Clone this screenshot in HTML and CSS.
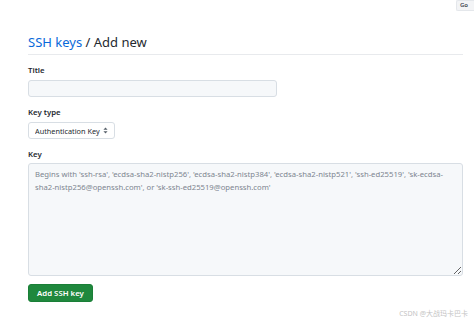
FILE: index.html
```html
<!DOCTYPE html>
<html lang="en-US">
<head>
    <meta charset="UTF-8">
    <meta name="viewport" content="width=device-width, initial-scale=1.0">
    <title>SSH keys / Add new</title>
    <link rel="stylesheet" href="styles.css">
</head>
<body>
    <div class="topbar">
        <button class="go-btn" type="button">Go</button>
    </div>

    <div class="container">
        <h1 class="subhead"><a href="#">SSH keys</a> / Add new</h1>

        <form class="key-form">
            <div class="form-group">
                <label for="title">Title</label>
                <input id="title" class="form-control title-input" type="text">
            </div>

            <div class="form-group">
                <label for="key_type">Key type</label>
                <div class="select-wrap">
                    <select id="key_type" class="form-select">
                        <option>Authentication Key</option>
                        <option>Signing Key</option>
                    </select>
                    <svg class="select-arrow" width="5" height="7" viewBox="0 0 6 8">
                        <path d="M3 0.5 L5.5 3.2 H0.5 Z M3 7.5 L5.5 4.8 H0.5 Z" fill="#57606a"/>
                    </svg>
                </div>
            </div>

            <div class="form-group key-group">
                <label for="key">Key</label>
                <textarea id="key" class="form-control key-input" placeholder="Begins with 'ssh-rsa', 'ecdsa-sha2-nistp256', 'ecdsa-sha2-nistp384', 'ecdsa-sha2-nistp521', 'ssh-ed25519', 'sk-ecdsa-sha2-nistp256@openssh.com', or 'sk-ssh-ed25519@openssh.com'"></textarea>
            </div>

            <button class="btn-primary" type="button">Add SSH key</button>
        </form>
    </div>

    <div class="watermark">CSDN @大战玛卡巴卡</div>
</body>
</html>
```

FILE: styles.css
```css
:root {
    --primary-font: "Noto Sans", "Open Sans", "Noto Sans CJK SC", sans-serif;
    --text-color: #24292f;
    --link-color: #0969da;
    --border-color: #d8dee4;
    --input-bg: #f6f8fa;
}

* {
    margin: 0;
    padding: 0;
    box-sizing: border-box;
}

body {
    font-family: var(--primary-font);
    color: var(--text-color);
    background-color: #fff;
    width: 474px;
    height: 323px;
    overflow: hidden;
    position: relative;
}

.topbar {
    height: 12px;
    display: flex;
    justify-content: flex-end;
}

.go-btn {
    font-family: var(--primary-font);
    font-size: 6px;
    font-weight: 600;
    color: #3d444d;
    background-color: #f3f4f6;
    border: 1px solid #e4e7eb;
    border-right: none;
    border-radius: 2px 0 0 2px;
    width: 18px;
    height: 11px;
    line-height: 9px;
    padding-left: 3px;
    text-align: left;
}

.container {
    margin-left: 28px;
    width: 435px;
}

.subhead {
    margin-top: 19px;
    font-size: 13px;
    font-weight: 400;
    line-height: 22px;
    padding-bottom: 1px;
    border-bottom: 1px solid #e8eaed;
}

.subhead a {
    color: var(--link-color);
    text-decoration: none;
}

.key-form {
    padding-top: 9px;
}

.form-group {
    margin-bottom: 9px;
}

.form-group label {
    display: block;
    font-size: 7.8px;
    font-weight: 600;
    line-height: 12px;
    margin-bottom: 4px;
}

.key-group label {
    margin-bottom: 3px;
}

.key-group {
    margin-bottom: 8px;
}

.form-control {
    display: block;
    font-family: var(--primary-font);
    background-color: var(--input-bg);
    border: 1px solid var(--border-color);
    border-radius: 3px;
    outline: none;
}

.title-input {
    width: 249px;
    height: 17px;
}

.select-wrap {
    position: relative;
    width: 87px;
    height: 17px;
}

.form-select {
    display: block;
    appearance: none;
    width: 87px;
    height: 17px;
    font-family: var(--primary-font);
    font-size: 7.3px;
    color: var(--text-color);
    background-color: #fff;
    border: 1px solid var(--border-color);
    border-radius: 3px;
    padding-left: 6px;
    outline: none;
}

.select-arrow {
    position: absolute;
    right: 7px;
    top: 5px;
}

.key-input {
    width: 435px;
    height: 113px;
    font-size: 7.7px;
    line-height: 13px;
    padding: 4px 6px;
    resize: vertical;
}

.key-input::placeholder {
    color: #7d8590;
}

.btn-primary {
    display: block;
    font-family: var(--primary-font);
    font-size: 7.8px;
    font-weight: 600;
    color: #fff;
    background-color: #1f883d;
    border: 1px solid #1a7f37;
    border-radius: 3px;
    width: 65px;
    height: 18px;
}

.watermark {
    position: absolute;
    right: 6px;
    bottom: 5px;
    font-size: 7px;
    color: #c4c4c4;
}
```
